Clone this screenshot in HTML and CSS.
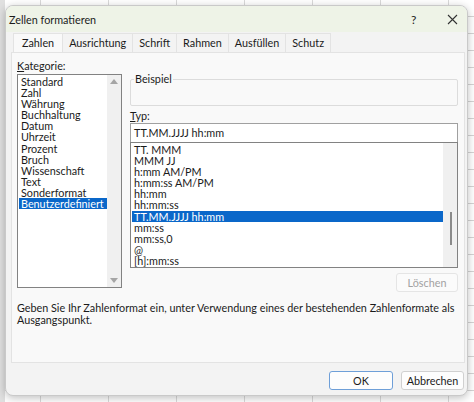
FILE: index.html
```html
<!DOCTYPE html>
<html lang="de">
<head>
    <meta charset="UTF-8">
    <title>Zellen formatieren</title>
    <link rel="stylesheet" href="styles.css">
</head>
<body>
    <div class="dialog">
        <div class="titlebar">
            <span class="title">Zellen formatieren</span>
            <span class="help">?</span>
            <svg class="close" width="11" height="11" viewBox="0 0 11 11">
                <path d="M1 1L10 10M10 1L1 10" stroke="#333" stroke-width="1.1" fill="none"/>
            </svg>
        </div>

        <div class="tabs">
            <div class="tab active">Zahlen</div>
            <div class="tab">Ausrichtung</div>
            <div class="tab">Schrift</div>
            <div class="tab">Rahmen</div>
            <div class="tab">Ausfüllen</div>
            <div class="tab">Schutz</div>
        </div>

        <div class="panel">
            <div class="columns">
                <div class="col-left">
                    <div class="label"><u>K</u>ategorie:</div>
                    <div class="listbox cat-list">
                        <ul class="items">
                            <li>Standard</li>
                            <li>Zahl</li>
                            <li>Währung</li>
                            <li>Buchhaltung</li>
                            <li>Datum</li>
                            <li>Uhrzeit</li>
                            <li>Prozent</li>
                            <li>Bruch</li>
                            <li>Wissenschaft</li>
                            <li>Text</li>
                            <li>Sonderformat</li>
                            <li class="selected">Benutzerdefiniert</li>
                        </ul>
                        <div class="scrollbar arrows">
                            <span class="arrow up"></span>
                            <span class="arrow down"></span>
                        </div>
                    </div>
                </div>

                <div class="col-right">
                    <fieldset class="sample">
                        <legend>Beispiel</legend>
                    </fieldset>

                    <div class="label typ-label"><u>T</u>yp:</div>
                    <div class="typ-input">TT.MM.JJJJ hh:mm</div>
                    <div class="listbox fmt-list">
                        <ul class="items">
                            <li>TT. MMM</li>
                            <li>MMM JJ</li>
                            <li>h:mm AM/PM</li>
                            <li>h:mm:ss AM/PM</li>
                            <li>hh:mm</li>
                            <li>hh:mm:ss</li>
                            <li class="selected">TT.MM.JJJJ hh:mm</li>
                            <li>mm:ss</li>
                            <li>mm:ss,0</li>
                            <li>@</li>
                            <li>[h]:mm:ss</li>
                        </ul>
                        <div class="scrollbar">
                            <span class="thumb"></span>
                        </div>
                    </div>
                    <div class="btn-row">
                        <button class="btn disabled">Löschen</button>
                    </div>
                </div>
            </div>

            <p class="hint">Geben Sie Ihr Zahlenformat ein, unter Verwendung eines der bestehenden Zahlenformate als Ausgangspunkt.</p>
        </div>

        <div class="footer">
            <button class="btn primary">OK</button>
            <button class="btn">Abbrechen</button>
        </div>
    </div>
</body>
</html>
```

FILE: styles.css
```css
body {
    margin: 0;
    width: 474px;
    height: 402px;
    overflow: hidden;
    font-family: Lato, "Liberation Sans", sans-serif;
    font-size: 10.8px;
    color: #1b1b1b;
    /* sheet grid behind the dialog */
    background-color: #ffffff;
    background-image:
        linear-gradient(to right, #e0e0e0 0, #e0e0e0 5px, transparent 5px),
        repeating-linear-gradient(to bottom, transparent 0, transparent 16px, #d4d4d4 16px, #d4d4d4 17px),
        repeating-linear-gradient(to right, transparent 0, transparent 40px, #dadada 40px, #dadada 41px, transparent 41px, transparent 68px);
}

.dialog {
    margin: 5px 0 0 5px;
    width: 463px;
    height: 391px;
    background: #f3f3f3;
    border: 1px solid #c9c9c9;
    border-radius: 8px;
    box-shadow: 0 2px 8px rgba(0, 0, 0, 0.25);
    box-sizing: border-box;
    display: flex;
    flex-direction: column;
    overflow: hidden;
}

.titlebar {
    height: 26px;
    display: flex;
    align-items: center;
    background: #eef3e7;
    padding-left: 3px;
    flex-shrink: 0;
}
.title {
    font-size: 10.8px;
    flex: 1;
}
.help {
    font-size: 12px;
    width: 14px;
    margin-right: 22px;
}
.close {
    margin-right: 9px;
}

.tabs {
    display: flex;
    height: 19px;
    margin: 1px 0 0 7px;
    flex-shrink: 0;
}
.tab {
    padding: 0 6px;
    line-height: 18px;
    border: 1px solid #e3e3e3;
    border-bottom: none;
    border-left: none;
    background: #f3f3f3;
}
.tab:first-child {
    border-left: 1px solid #e3e3e3;
}
.tab.active {
    background: #f9f9f9;
    padding: 0 8px;
}

.panel {
    margin: 0 2px 0 5px;
    height: 311px;
    background: #f9f9f9;
    border: 1px solid #e3e3e3;
    box-sizing: border-box;
    padding: 6px 6px 0 5px;
    flex-shrink: 0;
}

.columns {
    display: flex;
    gap: 8px;
}
.col-left {
    width: 105px;
}
.col-right {
    flex: 1;
    width: 328px;
}

.label {
    line-height: 14px;
    height: 14px;
}
u {
    text-decoration-thickness: 1px;
}

.listbox {
    display: flex;
    background: #ffffff;
    border: 1px solid #828282;
    box-sizing: border-box;
}
.items {
    list-style: none;
    margin: 0;
    padding: 1px 0 0 1px;
    flex: 1;
}
.items li {
    height: 11.1px;
    line-height: 11.1px;
    padding-left: 2px;
    white-space: nowrap;
}
.items li.selected {
    background: #0a67c9;
    color: #ffffff;
}

.cat-list {
    height: 214px;
    margin-top: 1px;
}

.scrollbar {
    width: 14px;
    background: #f0f0f0;
    display: flex;
    flex-direction: column;
    align-items: center;
}
.arrows {
    justify-content: space-between;
    padding: 4px 0;
}
.arrow {
    width: 0;
    height: 0;
    border-left: 4px solid transparent;
    border-right: 4px solid transparent;
}
.arrow.up {
    border-bottom: 5px solid #a5a5a5;
}
.arrow.down {
    border-top: 5px solid #a5a5a5;
}
.thumb {
    width: 2px;
    height: 33px;
    background: #8a8a8a;
    margin-top: 69px;
    margin-left: 1px;
}

.sample {
    margin: 14px 0 0;
    padding: 0;
    height: 33px;
    border: 1px solid #dcdcdc;
    border-radius: 2px;
    box-sizing: border-box;
}
.sample legend {
    padding: 0 1px;
    margin-left: 3px;
    line-height: 12px;
}

.typ-label {
    margin-top: 3px;
}
.typ-input {
    height: 19px;
    line-height: 18px;
    border: 1px solid #a0a0a0;
    border-bottom: none;
    background: #ffffff;
    padding-left: 3px;
    box-sizing: border-box;
}
.fmt-list {
    height: 126px;
}

.btn-row {
    display: flex;
    justify-content: flex-end;
    margin-top: 5px;
}

.btn {
    font-family: inherit;
    font-size: 10.8px;
    color: #1b1b1b;
    background: #fdfdfd;
    border: 1px solid #d0d0d0;
    border-radius: 3px;
    height: 19px;
    padding: 0;
}
.btn.disabled {
    width: 62px;
    color: #a2a2a2;
    border-color: #e5e5e5;
    background: #fbfbfb;
}

.hint {
    margin: 10px 0 0;
    line-height: 12px;
    width: 440px;
}

.footer {
    display: flex;
    justify-content: flex-end;
    gap: 8px;
    padding: 8px 3px 0 0;
}
.footer .btn {
    width: 63px;
}
.btn.primary {
    border-color: #6e9fd8;
    width: 64px;
}
```
